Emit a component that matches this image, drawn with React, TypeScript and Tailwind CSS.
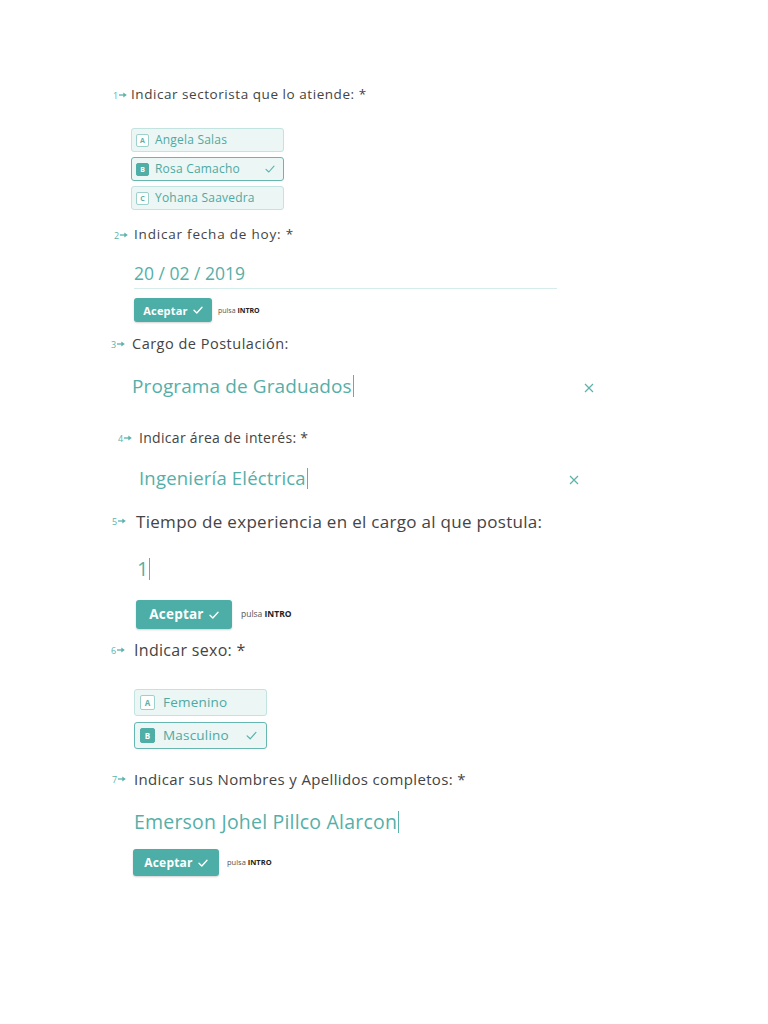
import React from "react";

const FONT = { fontFamily: '"Open Sans", "Liberation Sans", sans-serif' };

function Num({ n, w }: { n: number; w: string }) {
  return (
    <span className={`flex items-center shrink-0 ${w}`}>
      <span className="text-[9px] leading-none text-[#5ab2ab]">{n}</span>
      <svg width="8" height="6" viewBox="0 0 8 6" className="ml-[1px]">
        <path d="M0 3 H5" stroke="#5ab2ab" strokeWidth="1.3" />
        <path d="M4.3 0.4 L7.8 3 L4.3 5.6 Z" fill="#5ab2ab" />
      </svg>
    </span>
  );
}

function Check({ size = 10, color = "#ffffff", sw = 1.4 }: { size?: number; color?: string; sw?: number }) {
  return (
    <svg width={size} height={size} viewBox="0 0 10 10">
      <path d="M1 5.3 L3.8 8 L9 2.2" fill="none" stroke={color} strokeWidth={sw} strokeLinecap="round" strokeLinejoin="round" />
    </svg>
  );
}

function XIcon() {
  return (
    <svg width="10" height="10" viewBox="0 0 10 10">
      <path d="M1 1 L9 9 M9 1 L1 9" stroke="#5ab2ab" strokeWidth="1.2" />
    </svg>
  );
}

function Option({
  k,
  label,
  selected,
  size,
}: {
  k: string;
  label: string;
  selected?: boolean;
  size: "sm" | "md";
}) {
  const box =
    size === "sm"
      ? "w-[153px] h-[24px] px-[4px] gap-[6px] text-[12px]"
      : "w-[133px] h-[27px] px-[5px] gap-[8px] text-[13.5px]";
  const key = size === "sm" ? "w-[13px] h-[13px] text-[7px]" : "w-[15px] h-[15px] text-[8px]";
  return (
    <div
      className={`flex items-center rounded-[3px] bg-[#ebf6f5] border ${
        selected ? "border-[#66b7b0]" : "border-[#c2e3df]"
      } ${box}`}
    >
      <span
        className={`flex items-center justify-center rounded-[2px] border font-bold leading-none ${key} ${
          selected ? "bg-[#4faea6] border-[#4faea6] text-white" : "bg-white border-[#9fd1cc] text-[#5ab2ab]"
        }`}
      >
        {k}
      </span>
      <span className="text-[#4fa9a2] tracking-[0.2px] leading-none">{label}</span>
      {selected && (
        <span className="ml-auto mr-[4px] flex items-center">
          <Check size={size === "sm" ? 10 : 11} color="#5ab2ab" sw={1.1} />
        </span>
      )}
    </div>
  );
}

function Button({ cls, hint }: { cls: string; hint: string }) {
  return (
    <div className="flex items-center">
      <div
        className={`flex items-center justify-center gap-[5px] rounded-[3px] bg-[#4caea6] text-white font-bold shadow-[0_1px_2px_rgba(0,0,0,0.18)] ${cls}`}
      >
        <span className="leading-none tracking-[0.2px]">Aceptar</span>
        <Check size={10} />
      </div>
      <span className={`${hint} leading-none text-[#555]`}>
        pulsa <b className="text-[#222]">INTRO</b>
      </span>
    </div>
  );
}

function Cursor({ h }: { h: string }) {
  return <span className={`inline-block w-[1px] bg-[#5ab2ab] ${h} ml-[1px]`} />;
}

export default function App() {
  const label = "text-[#444444] leading-none";
  const teal = "text-[#55afa8]";
  return (
    <div className="w-[768px] h-[1024px] bg-white overflow-hidden" style={FONT}>
      <div className="flex flex-col pt-[85px]">
        {/* Q1 */}
        <div className="flex items-center h-[20px] pl-[113px]">
          <Num n={1} w="w-[18px]" />
          <span className={`${label} text-[13.5px] tracking-[0.55px]`}>Indicar sectorista que lo atiende: *</span>
        </div>
        <div className="flex flex-col gap-[5px] mt-[23px] ml-[131px]">
          <Option k="A" label="Angela Salas" size="sm" />
          <Option k="B" label="Rosa Camacho" size="sm" selected />
          <Option k="C" label="Yohana Saavedra" size="sm" />
        </div>

        {/* Q2 */}
        <div className="flex items-center h-[20px] pl-[114px] mt-[15px]">
          <Num n={2} w="w-[20px]" />
          <span className={`${label} text-[13.5px] tracking-[0.8px]`}>Indicar fecha de hoy: *</span>
        </div>
        <div className="mt-[15px] ml-[134px] w-[423px] h-[29px] border-b border-[#d6ecea] flex items-center">
          <span className={`${teal} text-[17.5px] leading-none tracking-[0px]`}>20 / 02 / 2019</span>
        </div>
        <div className="mt-[9px] ml-[134px]">
          <Button cls="w-[78px] h-[24px] text-[11px]" hint="ml-[6px] text-[7px]" />
        </div>

        {/* Q3 */}
        <div className="flex items-center h-[20px] pl-[111px] mt-[12px]">
          <Num n={3} w="w-[21px]" />
          <span className={`${label} text-[14.5px] tracking-[0.5px]`}>Cargo de Postulación:</span>
        </div>
        <div className="mt-[18px] ml-[132px] w-[462px] h-[28px] flex items-center">
          <span className={`${teal} text-[19px] leading-none tracking-[0.1px]`}>Programa de Graduados</span>
          <Cursor h="h-[22px]" />
          <span className="ml-auto mt-[3px]">
            <XIcon />
          </span>
        </div>

        {/* Q4 */}
        <div className="flex items-center h-[20px] pl-[118px] mt-[28px]">
          <Num n={4} w="w-[21px]" />
          <span className={`${label} text-[14px] tracking-[0.3px]`}>Indicar área de interés: *</span>
        </div>
        <div className="mt-[16px] ml-[139px] w-[440px] h-[28px] flex items-center">
          <span className={`${teal} text-[18.5px] leading-none tracking-[0.2px]`}>Ingeniería Eléctrica</span>
          <Cursor h="h-[21px]" />
          <span className="ml-auto mt-[3px]">
            <XIcon />
          </span>
        </div>

        {/* Q5 */}
        <div className="flex items-center h-[24px] pl-[112px] mt-[17px]">
          <Num n={5} w="w-[24px]" />
          <span className={`${label} text-[17px] tracking-[0.3px]`}>Tiempo de experiencia en el cargo al que postula:</span>
        </div>
        <div className="mt-[22px] ml-[137px] h-[28px] flex items-center">
          <span className={`${teal} text-[20px] leading-none`}>1</span>
          <Cursor h="h-[22px]" />
        </div>
        <div className="mt-[17px] ml-[136px]">
          <Button cls="w-[96px] h-[29px] text-[13.5px]" hint="ml-[9px] text-[8.5px]" />
        </div>

        {/* Q6 */}
        <div className="flex items-center h-[22px] pl-[111px] mt-[10px]">
          <Num n={6} w="w-[23px]" />
          <span className={`${label} text-[16px] tracking-[0.3px]`}>Indicar sexo: *</span>
        </div>
        <div className="flex flex-col gap-[6px] mt-[28px] ml-[134px]">
          <Option k="A" label="Femenino" size="md" />
          <Option k="B" label="Masculino" size="md" selected />
        </div>

        {/* Q7 */}
        <div className="flex items-center h-[20px] pl-[112px] mt-[20px]">
          <Num n={7} w="w-[22px]" />
          <span className={`${label} text-[15px] tracking-[0.35px]`}>Indicar sus Nombres y Apellidos completos: *</span>
        </div>
        <div className="mt-[19px] ml-[134px] h-[28px] flex items-center">
          <span className={`${teal} text-[19.5px] leading-none tracking-[0.2px]`}>Emerson Johel Pillco Alarcon</span>
          <Cursor h="h-[22px]" />
        </div>
        <div className="mt-[13px] ml-[133px]">
          <Button cls="w-[86px] h-[27px] text-[12px]" hint="ml-[8px] text-[7.5px]" />
        </div>
      </div>
    </div>
  );
}
